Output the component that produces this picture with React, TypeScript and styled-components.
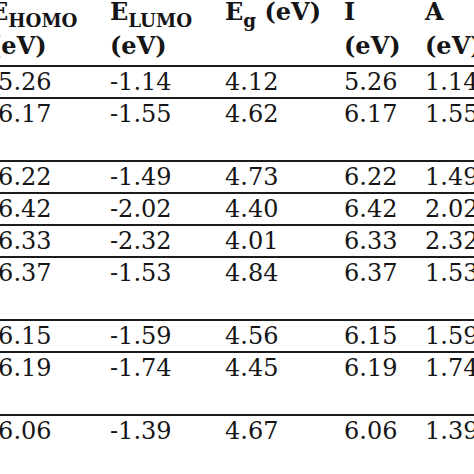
import React from "react"
import styled, { createGlobalStyle } from "styled-components"

const GlobalStyle = createGlobalStyle`
  html, body {
    margin: 0;
    padding: 0;
    background: #fff;
    overflow: hidden;
  }
`

const Frame = styled.div`
  width: 474px;
  height: 474px;
  overflow: hidden;
  background: #fff;
  color: #151515;
  font-family: "DejaVu Serif", "Liberation Serif", serif;
`

const Table = styled.div`
  margin: -5px 0 0 -10px;
  width: 520px;
`

const Row = styled.div<{ $lines?: number; $head?: boolean }>`
  display: grid;
  grid-template-columns: 120px 115px 119px 81px 1fr;
  border-bottom: 2px solid #1c1c1c;
  height: ${(p) => (p.$head ? 70 : p.$lines === 2 ? 61 : 30)}px;
`

const HeadCell = styled.div`
  font-weight: bold;
  font-size: 24px;
  line-height: 34px;
  white-space: nowrap;
`

const Sub = styled.sub`
  font-size: 0.76em;
  vertical-align: -0.36em;
  line-height: 0;
`

const Cell = styled.div`
  font-size: 24px;
  line-height: 30px;
  white-space: nowrap;
`

const rows: { v: string[]; lines?: number }[] = [
  { v: ["-5.26", "-1.14", "4.12", "5.26", "1.14"] },
  { v: ["-6.17", "-1.55", "4.62", "6.17", "1.55"], lines: 2 },
  { v: ["-6.22", "-1.49", "4.73", "6.22", "1.49"] },
  { v: ["-6.42", "-2.02", "4.40", "6.42", "2.02"] },
  { v: ["-6.33", "-2.32", "4.01", "6.33", "2.32"] },
  { v: ["-6.37", "-1.53", "4.84", "6.37", "1.53"], lines: 2 },
  { v: ["-6.15", "-1.59", "4.56", "6.15", "1.59"] },
  { v: ["-6.19", "-1.74", "4.45", "6.19", "1.74"], lines: 2 },
  { v: ["-6.06", "-1.39", "4.67", "6.06", "1.39"], lines: 2 },
]

const App = () => (
  <Frame>
    <GlobalStyle />
    <Table>
      <Row $head>
        <HeadCell>
          E<Sub>HOMO</Sub>
          <br />
          (eV)
        </HeadCell>
        <HeadCell>
          E<Sub>LUMO</Sub>
          <br />
          (eV)
        </HeadCell>
        <HeadCell>
          E<Sub>g</Sub> (eV)
        </HeadCell>
        <HeadCell>
          I
          <br />
          (eV)
        </HeadCell>
        <HeadCell>
          A
          <br />
          (eV)
        </HeadCell>
      </Row>
      {rows.map((r, i) => (
        <Row key={i} $lines={r.lines}>
          {r.v.map((c, j) => (
            <Cell key={j}>{c}</Cell>
          ))}
        </Row>
      ))}
    </Table>
  </Frame>
)

export default App
